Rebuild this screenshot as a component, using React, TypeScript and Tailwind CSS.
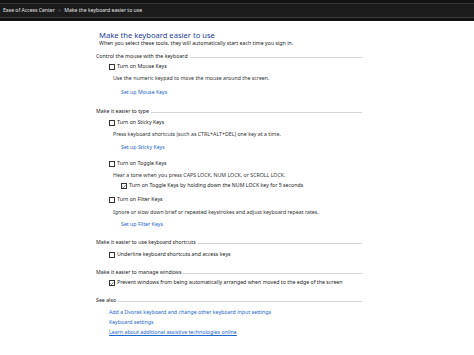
import React from "react";

const font = { fontFamily: '"Segoe UI", "Noto Sans", "Open Sans", sans-serif' };

const Box = ({ checked }: { checked?: boolean }) => (
  <span className="w-[6px] h-[6px] border border-[#333] bg-white flex items-center justify-center shrink-0">
    {checked && (
      <svg viewBox="0 0 6 6" className="w-[5px] h-[5px]">
        <path d="M0.6 3.1 L2.3 4.7 L5.4 1" fill="none" stroke="#222" strokeWidth="0.9" />
      </svg>
    )}
  </span>
);

const Heading = ({ text, className }: { text: string; className: string }) => (
  <div className={`flex items-center gap-[2px] h-[8px] text-[#222] ${className}`}>
    <span className="whitespace-nowrap">{text}</span>
    <span className="flex-1 border-t border-[#d6d6d6]" />
  </div>
);

const Check = ({ text, checked, className }: { text: string; checked?: boolean; className: string }) => (
  <div className={`flex items-center gap-[2px] h-[8px] text-[#222] ${className}`}>
    <Box checked={checked} />
    <span className="whitespace-nowrap">{text}</span>
  </div>
);

const Desc = ({ text, className }: { text: string; className: string }) => (
  <div className={`h-[8px] leading-[8px] text-[#333] whitespace-nowrap ${className}`}>{text}</div>
);

const Link = ({ text, className }: { text: string; className: string }) => (
  <div className={`h-[8px] leading-[8px] text-[#1a66c9] whitespace-nowrap ${className}`}>{text}</div>
);

export default function App() {
  return (
    <div className="w-[474px] h-[355px] bg-white overflow-hidden text-[5.25px]" style={font}>
      {/* top bar */}
      <div className="h-[21px] bg-[#121212] flex flex-col">
        <div className="h-[3px]" />
        <div className="h-[1px] bg-[#353535]" />
        <div className="h-[13px] bg-[#1c1c1c] flex items-center pl-[3px] gap-[4px] text-[5.1px] text-[#e6e6e6]">
          <span>Ease of Access Center</span>
          <span className="text-[#aaa]">›</span>
          <span>Make the keyboard easier to use</span>
        </div>
        <div className="h-[1px] bg-[#3c3c3c]" />
        <div className="h-[3px]" />
      </div>

      <div className="pl-[96px] w-[362px]">
        <div className="pl-[3px] mt-[10px] h-[8px] leading-[8px] text-[7.6px] text-[#1e3c96] whitespace-nowrap">
          Make the keyboard easier to use
        </div>
        <div className="pl-[3px] h-[8px] leading-[8px] text-[#222] whitespace-nowrap">
          When you select these tools, they will automatically start each time you sign in.
        </div>

        <Heading text="Control the mouse with the keyboard" className="mt-[6px]" />
        <Check text="Turn on Mouse Keys" className="mt-[2px] pl-[13px]" />
        <Desc text="Use the numeric keypad to move the mouse around the screen." className="mt-[3px] pl-[17px]" />
        <Link text="Set up Mouse Keys" className="mt-[6px] pl-[25px]" />

        <Heading text="Make it easier to type" className="mt-[12px]" />
        <Check text="Turn on Sticky Keys" className="mt-[3px] pl-[13px]" />
        <Desc text="Press keyboard shortcuts (such as CTRL+ALT+DEL) one key at a time." className="mt-[3px] pl-[17px]" />
        <Link text="Set up Sticky Keys" className="mt-[5px] pl-[25px]" />
        <Check text="Turn on Toggle Keys" className="mt-[9px] pl-[13px]" />
        <Desc text="Hear a tone when you press CAPS LOCK, NUM LOCK, or SCROLL LOCK." className="mt-[3px] pl-[17px]" />
        <Check
          text="Turn on Toggle Keys by holding down the NUM LOCK key for 5 seconds"
          checked
          className="mt-[3px] pl-[25px]"
        />
        <Check text="Turn on Filter Keys" className="mt-[6px] pl-[13px]" />
        <Desc
          text="Ignore or slow down brief or repeated keystrokes and adjust keyboard repeat rates."
          className="mt-[4px] pl-[17px]"
        />
        <Link text="Set up Filter Keys" className="mt-[4px] pl-[25px]" />

        <Heading text="Make it easier to use keyboard shortcuts" className="mt-[11px]" />
        <Check text="Underline keyboard shortcuts and access keys" className="mt-[4px] pl-[13px]" />

        <Heading text="Make it easier to manage windows" className="mt-[10px]" />
        <Check
          text="Prevent windows from being automatically arranged when moved to the edge of the screen"
          checked
          className="mt-[2px] pl-[13px]"
        />

        <Heading text="See also" className="mt-[10px]" />
        <Link text="Add a Dvorak keyboard and change other keyboard input settings" className="mt-[3px] pl-[13px]" />
        <Link text="Keyboard settings" className="mt-[2px] pl-[13px]" />
        <Link text="Learn about additional assistive technologies online" className="mt-[2px] pl-[13px] underline" />
      </div>
    </div>
  );
}
